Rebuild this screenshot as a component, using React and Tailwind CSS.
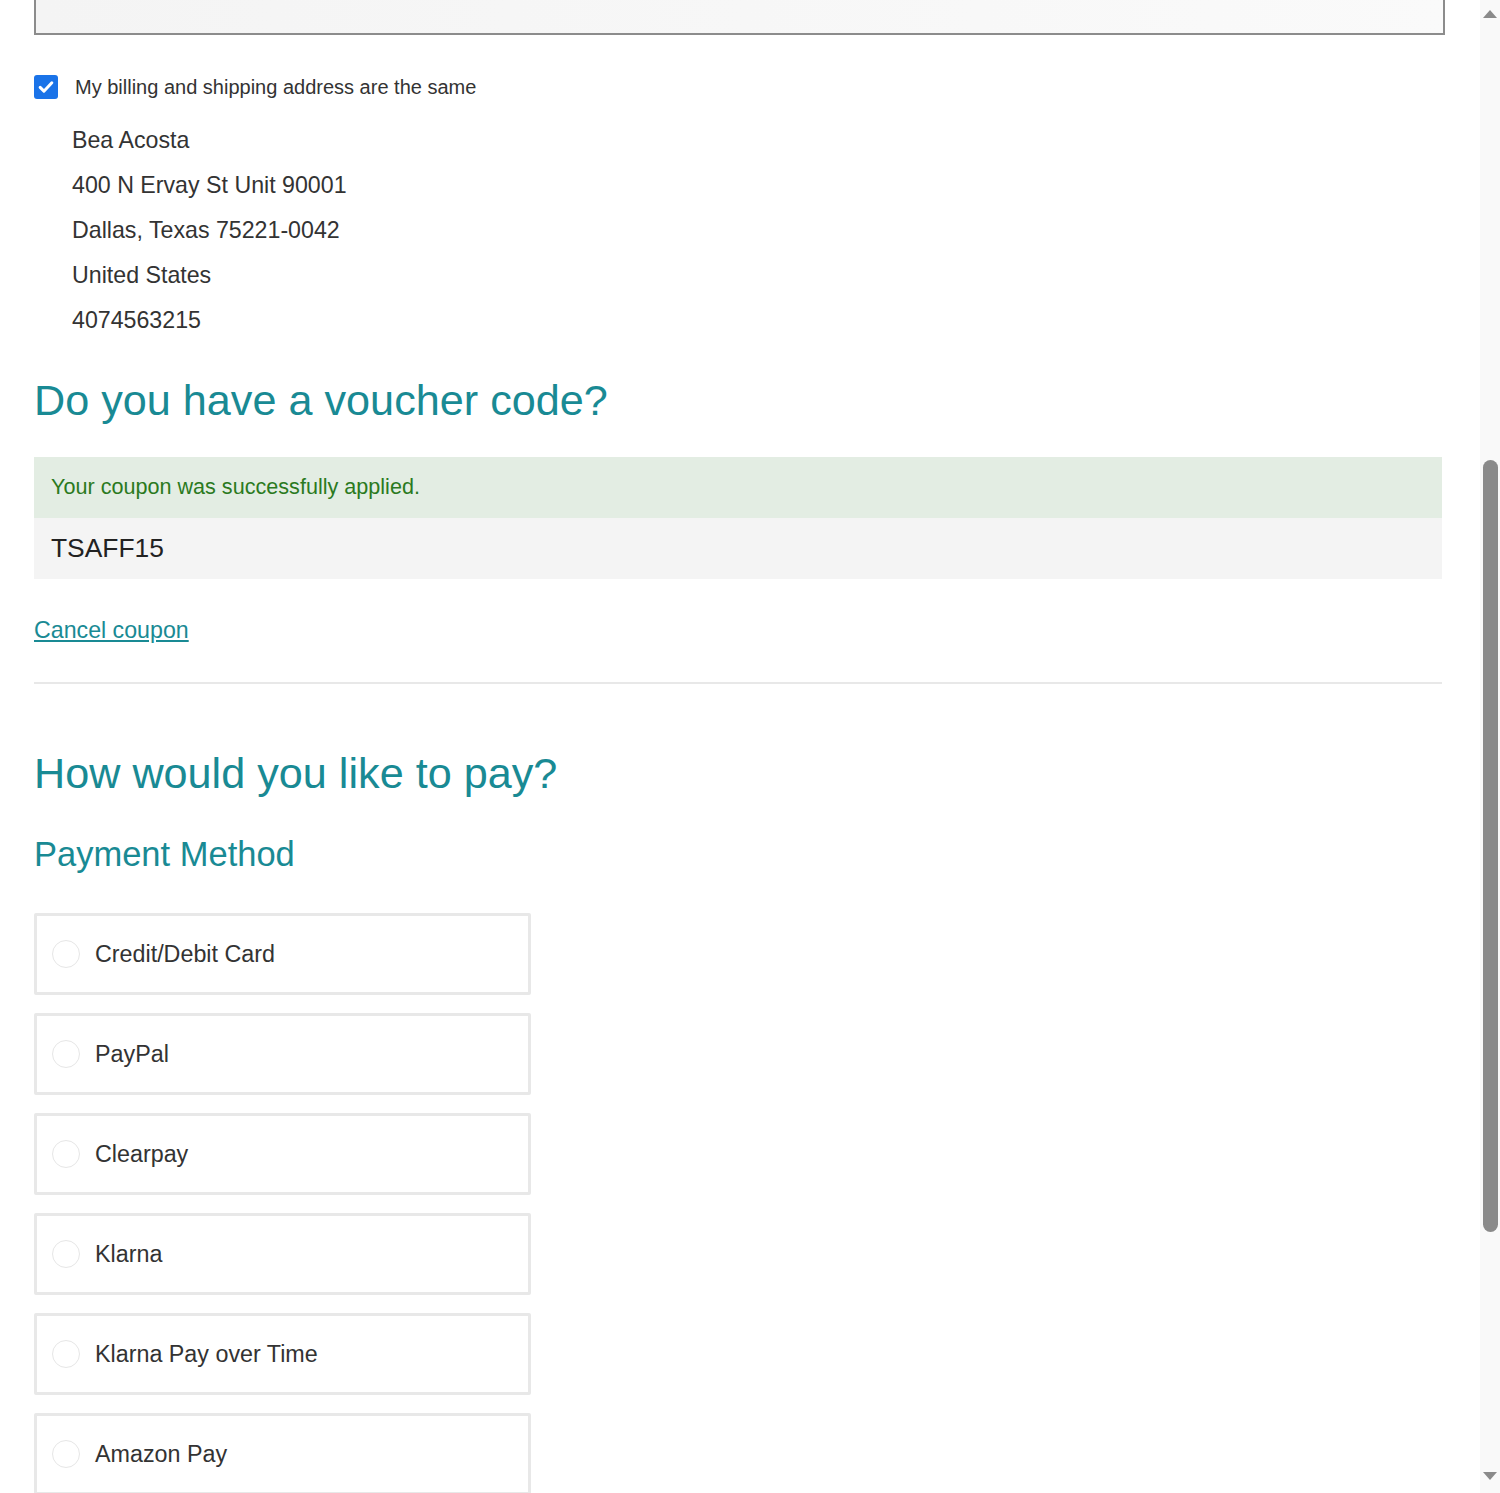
const address = [
  "Bea Acosta",
  "400 N Ervay St Unit 90001",
  "Dallas, Texas 75221-0042",
  "United States",
  "4074563215",
];

const methods = [
  "Credit/Debit Card",
  "PayPal",
  "Clearpay",
  "Klarna",
  "Klarna Pay over Time",
  "Amazon Pay",
];

const PaymentOption = ({ label }) => (
  <label className="flex h-[82px] w-[497px] items-center rounded-[2px] border-[3px] border-[#e8e8e8] bg-white pl-[15px]">
    <span className="h-[28px] w-[28px] shrink-0 rounded-full border border-[#e6e6e6] bg-white" />
    <span className="ml-[15px] text-[23.3px] text-[#333]">{label}</span>
  </label>
);

export default function App() {
  return (
    <div className="flex h-[1493px] w-[1500px] overflow-hidden bg-white font-['Liberation_Sans',Arial,sans-serif]">
      <main className="flex-1 pl-[34px] pr-[35px]">
        {/* bottom edge of the field above */}
        <div className="h-[35px] w-[1411px] border-x-2 border-b-2 border-[#8c8c8c] bg-gradient-to-r from-[#f4f4f4] to-[#fafafa]" />

        <div className="mt-[40px] flex h-[24px] items-center">
          <span className="flex h-[24px] w-[24px] items-center justify-center rounded-[3px] bg-[#1a73e8]">
            <svg viewBox="0 0 24 24" className="h-[20px] w-[20px]" fill="none" stroke="white" strokeWidth="3.6" strokeLinecap="round" strokeLinejoin="round">
              <path d="M5 12.5l4.5 4.5L19 7" />
            </svg>
          </span>
          <span className="ml-[17px] text-[20px] text-[#333]">My billing and shipping address are the same</span>
        </div>

        <div className="mt-[19px] pl-[38px] text-[23.2px] leading-[45px] text-[#333]">
          {address.map((line) => (
            <div key={line}>{line}</div>
          ))}
        </div>

        <h2 className="mt-[32px] text-[43.2px] leading-[50px] text-[#198a94]">Do you have a voucher code?</h2>

        <div className="mt-[32px] w-[1408px]">
          <div className="flex h-[61px] items-center bg-[#e3ede3] pl-[17px] text-[21.6px] text-[#2b7a1e]">
            Your coupon was successfully applied.
          </div>
          <div className="flex h-[61px] items-center bg-[#f4f4f4] pl-[17px] text-[26.4px] text-[#222]">TSAFF15</div>
        </div>

        <a href="#" className="mt-[36px] block w-fit text-[23.2px] leading-[30px] text-[#198a94] underline">
          Cancel coupon
        </a>

        <hr className="mt-[37px] h-[2px] w-[1408px] border-0 bg-[#e8e8e8]" />

        <h2 className="mt-[64px] text-[43.2px] leading-[50px] text-[#198a94]">How would you like to pay?</h2>
        <h3 className="mt-[36px] text-[34.5px] leading-[40px] text-[#198a94]">Payment Method</h3>

        <div className="mt-[39px] flex flex-col gap-[18px]">
          {methods.map((m) => (
            <PaymentOption key={m} label={m} />
          ))}
        </div>
      </main>

      {/* browser scrollbar */}
      <aside className="flex w-[23px] flex-col items-center bg-[#f9f9f9]">
        <svg viewBox="0 0 14 8" className="mt-[10px] h-[8px] w-[14px]" fill="#8a8a8a">
          <path d="M7 0l7 8H0z" />
        </svg>
        <div className="mt-[442px] h-[772px] w-[15px] rounded-full bg-[#8a8a8a]" />
        <svg viewBox="0 0 14 8" className="mt-[240px] h-[8px] w-[14px]" fill="#8a8a8a">
          <path d="M0 0h14L7 8z" />
        </svg>
      </aside>
    </div>
  );
}
